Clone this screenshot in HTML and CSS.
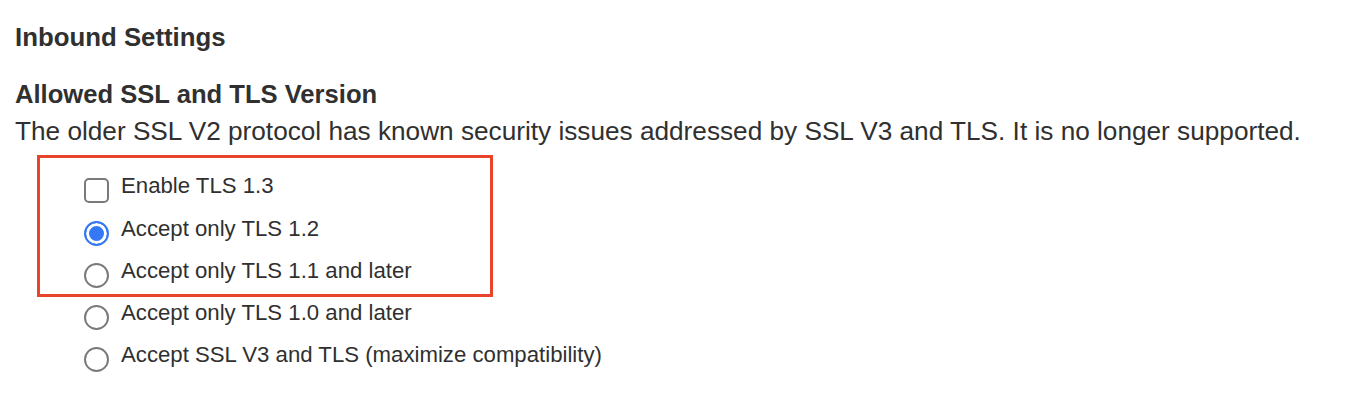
FILE: index.html
```html
<!DOCTYPE html>
<html lang="en">
<head>
    <meta charset="UTF-8">
    <meta name="viewport" content="width=device-width, initial-scale=1.0">
    <title>Inbound Settings</title>
    <link rel="stylesheet" href="styles.css">
</head>
<body>
    <section class="settings">
        <h2 class="settings-title">Inbound Settings</h2>

        <h3 class="group-title">Allowed SSL and TLS Version</h3>
        <p class="group-desc">The older SSL V2 protocol has known security issues addressed by SSL V3 and TLS. It is no longer supported.</p>

        <!-- Highlighted options -->
        <div class="highlight">
            <label class="option">
                <input type="checkbox" name="tls13">
                <span>Enable TLS 1.3</span>
            </label>
            <label class="option">
                <input type="radio" name="tlsVersion" value="1.2" checked>
                <span>Accept only TLS 1.2</span>
            </label>
            <label class="option">
                <input type="radio" name="tlsVersion" value="1.1">
                <span>Accept only TLS 1.1 and later</span>
            </label>
        </div>

        <div class="options">
            <label class="option">
                <input type="radio" name="tlsVersion" value="1.0">
                <span>Accept only TLS 1.0 and later</span>
            </label>
            <label class="option">
                <input type="radio" name="tlsVersion" value="ssl3">
                <span>Accept SSL V3 and TLS (maximize compatibility)</span>
            </label>
        </div>
    </section>
</body>
</html>
```

FILE: styles.css
```css
* {
    margin: 0;
    padding: 0;
    box-sizing: border-box;
    font-family: "Liberation Sans", Arial, sans-serif;
}

body {
    background-color: #fff;
    color: #303030;
}

.settings {
    padding: 22px 15px 0 15px;
}

.settings-title {
    font-size: 25.8px;
    line-height: 30px;
    font-weight: bold;
    margin-bottom: 27px;
}

.group-title {
    font-size: 25.6px;
    line-height: 30px;
    font-weight: bold;
    margin-bottom: 7px;
}

.group-desc {
    font-size: 26.2px;
    line-height: 30px;
    margin-bottom: 9px;
}

.highlight {
    width: 456px;
    margin-left: 22px;
    padding: 16px 0 6px 44px;
    border: 3px solid #e8442c;
    display: flex;
    flex-direction: column;
    gap: 13px;
}

.highlight .option:nth-child(2) {
    margin-top: 1px;
}

.options {
    padding: 4px 0 0 69px;
    display: flex;
    flex-direction: column;
    gap: 13px;
}

.option {
    display: flex;
    align-items: flex-start;
    gap: 12px;
    font-size: 22.2px;
    line-height: 24px;
}

.option input {
    appearance: none;
    -webkit-appearance: none;
    width: 25px;
    height: 25px;
    margin-top: 4px;
    flex-shrink: 0;
    border: 2px solid #7a7a7a;
    background-color: #fff;
}

.option input[type="checkbox"] {
    border-radius: 5px;
}

.option input[type="radio"] {
    border-radius: 50%;
}

.option input[type="radio"]:checked {
    border-color: #3478f6;
    background-color: #3478f6;
    box-shadow: inset 0 0 0 3px #fff;
}
```
